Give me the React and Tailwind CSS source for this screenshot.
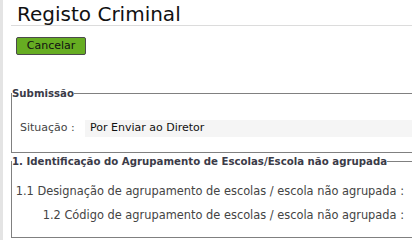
export default function App() {
  return (
    <div className="h-[240px] overflow-hidden border-l-[3px] border-[#e4e4e4] bg-white font-['DejaVu_Sans',sans-serif]">
      <div className="pl-[8px]">
        {/* Title */}
        <h1 className="h-[26px] border-b border-[#dcdcdc] pl-[6px] pt-[3px] text-[20px] leading-[22px] text-[#111]">
          Registo Criminal
        </h1>

        <div className="ml-[5px] mt-[6px]">
          <button className="h-[18px] w-[70px] rounded-[2px] border border-[#4b4b4b] bg-[#66ad22] text-[11px] leading-[16px] text-[#111]">
            Cancelar
          </button>
        </div>

        {/* Submissão */}
        <fieldset className="mt-[31px] w-[440px] border border-[#808080] pb-[15px] pt-[20px]">
          <legend className="p-0 text-[10.2px] font-bold leading-[13px] text-[#3b3b48]">Submissão</legend>
          <div className="flex h-[17px] items-center pl-[8px] text-[11px]">
            <span className="w-[65px] text-[#444]">Situação :</span>
            <span className="flex h-[17px] flex-1 items-center bg-[#f5f5f5] pl-[5px] text-[#111]">
              Por Enviar ao Diretor
            </span>
          </div>
        </fieldset>

        {/* Identificação */}
        <fieldset className="mt-[2px] w-[440px] border border-[#808080] pb-[15px] pt-[16px]">
          <legend className="p-0 text-[10.2px] font-bold leading-[13px] text-[#3b3b48]">
            1. Identificação do Agrupamento de Escolas/Escola não agrupada
          </legend>
          <div className="flex w-[392px] flex-col items-end gap-[10px] text-[11.4px] leading-[14px] text-[#444]">
            <span>1.1 Designação de agrupamento de escolas / escola não agrupada :</span>
            <span>1.2 Código de agrupamento de escolas / escola não agrupada :</span>
          </div>
        </fieldset>
      </div>
    </div>
  );
}
